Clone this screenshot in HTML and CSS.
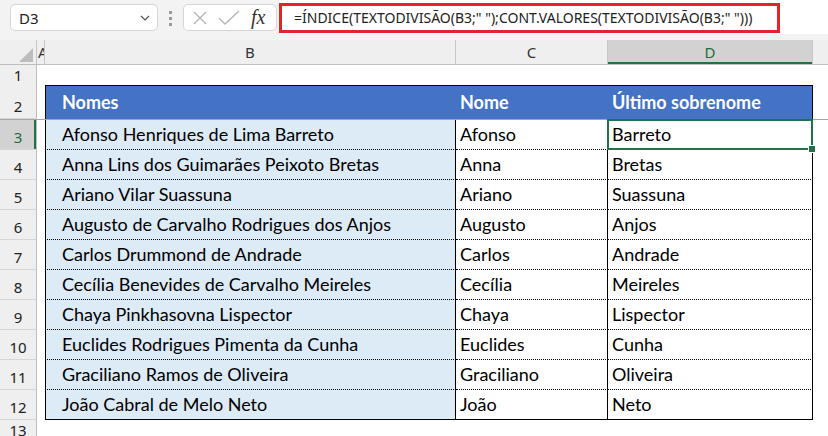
FILE: index.html
```html
<!DOCTYPE html>
<html lang="pt">
<head>
  <meta charset="UTF-8">
  <meta name="viewport" content="width=device-width, initial-scale=1.0">
  <title>TEXTODIVISÃO - Último sobrenome</title>
  <link rel="stylesheet" href="styles.css">
</head>
<body>

  <!-- Formula bar -->
  <div class="toolbar">
    <div class="namebox">
      <span>D3</span>
      <svg class="chevron" width="10" height="6" viewBox="0 0 10 6"><path d="M1 1 L5 5 L9 1" fill="none" stroke="#555" stroke-width="1.2"/></svg>
    </div>
    <div class="grip"><i></i><i></i><i></i></div>
    <div class="fxbox">
      <svg width="16" height="16" viewBox="0 0 16 16"><path d="M2 2 L14 14 M14 2 L2 14" stroke="#b4b4b4" stroke-width="1.3" fill="none"/></svg>
      <svg width="22" height="16" viewBox="0 0 22 16"><path d="M1 8 L7 14 L21 1" stroke="#b4b4b4" stroke-width="1.3" fill="none"/></svg>
      <span class="fx">fx</span>
    </div>
    <div class="formula-bar">
      <div class="formula">=ÍNDICE(TEXTODIVISÃO(B3;" ");CONT.VALORES(TEXTODIVISÃO(B3;" ")))</div>
    </div>
  </div>

  <!-- Sheet -->
  <div class="sheet">
    <div class="row col-heads">
      <div class="corner">
        <svg width="14" height="14" viewBox="0 0 14 14"><path d="M14 0 L14 14 L0 14 Z" fill="#bdbdbd"/></svg>
      </div>
      <div class="ch ch-a">A</div>
      <div class="ch">B</div>
      <div class="ch">C</div>
      <div class="ch active">D</div>
      <div class="ch last"></div>
    </div>

    <div class="row r1">
      <div class="rh">1</div>
      <div></div><div></div><div></div><div></div><div></div>
    </div>

    <div class="row r2">
      <div class="rh">2</div>
      <div></div>
      <div class="c hd b">Nomes</div>
      <div class="c hd">Nome</div>
      <div class="c hd d">Último sobrenome</div>
      <div></div>
    </div>

    <div class="row data frozen">
      <div class="rh active">3</div>
      <div></div>
      <div class="c b">Afonso Henriques de Lima Barreto</div>
      <div class="c m">Afonso</div>
      <div class="c d selected">Barreto<span class="sel"><span class="handle"></span></span></div>
      <div></div>
    </div>
    <div class="row data">
      <div class="rh">4</div>
      <div></div>
      <div class="c b">Anna Lins dos Guimarães Peixoto Bretas</div>
      <div class="c m">Anna</div>
      <div class="c d">Bretas</div>
      <div></div>
    </div>
    <div class="row data">
      <div class="rh">5</div>
      <div></div>
      <div class="c b">Ariano Vilar Suassuna</div>
      <div class="c m">Ariano</div>
      <div class="c d">Suassuna</div>
      <div></div>
    </div>
    <div class="row data">
      <div class="rh">6</div>
      <div></div>
      <div class="c b">Augusto de Carvalho Rodrigues dos Anjos</div>
      <div class="c m">Augusto</div>
      <div class="c d">Anjos</div>
      <div></div>
    </div>
    <div class="row data">
      <div class="rh">7</div>
      <div></div>
      <div class="c b">Carlos Drummond de Andrade</div>
      <div class="c m">Carlos</div>
      <div class="c d">Andrade</div>
      <div></div>
    </div>
    <div class="row data">
      <div class="rh">8</div>
      <div></div>
      <div class="c b">Cecília Benevides de Carvalho Meireles</div>
      <div class="c m">Cecília</div>
      <div class="c d">Meireles</div>
      <div></div>
    </div>
    <div class="row data">
      <div class="rh">9</div>
      <div></div>
      <div class="c b">Chaya Pinkhasovna Lispector</div>
      <div class="c m">Chaya</div>
      <div class="c d">Lispector</div>
      <div></div>
    </div>
    <div class="row data">
      <div class="rh">10</div>
      <div></div>
      <div class="c b">Euclides Rodrigues Pimenta da Cunha</div>
      <div class="c m">Euclides</div>
      <div class="c d">Cunha</div>
      <div></div>
    </div>
    <div class="row data">
      <div class="rh">11</div>
      <div></div>
      <div class="c b">Graciliano Ramos de Oliveira</div>
      <div class="c m">Graciliano</div>
      <div class="c d">Oliveira</div>
      <div></div>
    </div>
    <div class="row data lastrow">
      <div class="rh">12</div>
      <div></div>
      <div class="c b">João Cabral de Melo Neto</div>
      <div class="c m">João</div>
      <div class="c d">Neto</div>
      <div></div>
    </div>

    <div class="row r13">
      <div class="rh">13</div>
      <div></div><div></div><div></div><div></div><div></div>
    </div>
  </div>

</body>
</html>
```

FILE: styles.css
```css
body {
  margin: 0;
  width: 828px;
  height: 436px;
  overflow: hidden;
  background-color: #fff;
  font-family: "Noto Sans", "Open Sans", sans-serif;
  color: #000;
}

/* ---------- formula bar ---------- */

.toolbar {
  display: flex;
  align-items: flex-start;
  height: 40px;
  background-color: #f3f3f3;
  box-sizing: border-box;
}

.namebox {
  display: flex;
  align-items: center;
  justify-content: space-between;
  box-sizing: border-box;
  width: 148px;
  height: 27px;
  margin: 4px 0 0 10px;
  padding: 0 7px 0 8px;
  background-color: #fff;
  border: 1px solid #d6d6d6;
  border-radius: 5px;
  font-size: 15px;
  color: #222;
}

.grip {
  display: flex;
  flex-direction: column;
  gap: 3px;
  margin: 11px 0 0 11px;
}

.grip i {
  display: block;
  width: 3px;
  height: 3px;
  background-color: #9a9a9a;
}

.fxbox {
  display: flex;
  align-items: center;
  box-sizing: border-box;
  width: 94px;
  height: 27px;
  margin: 4px 0 0 11px;
  padding: 0 0 0 8px;
  gap: 10px;
  background-color: #fff;
  border: 1px solid #d6d6d6;
  border-radius: 5px;
}

.fx {
  font-family: "Liberation Serif", serif;
  font-style: italic;
  font-size: 20px;
  color: #333;
  margin-left: 1px;
}

.formula-bar {
  flex: 1;
  height: 34px;
  margin-left: 2px;
  padding-top: 3px;
  background-color: #fff;
  box-sizing: border-box;
}

.formula {
  box-sizing: border-box;
  width: 501px;
  height: 30px;
  padding: 0 0 0 12px;
  border: 3px solid #e4232b;
  font-size: 14px;
  line-height: 24px;
  color: #222;
  white-space: nowrap;
}

/* ---------- sheet ---------- */

.row {
  display: grid;
  grid-template-columns: 37px 8px 411px 152px 205px 15px;
}

.col-heads {
  height: 24px;
  background-color: #efefef;
  border-bottom: 1px solid #bdbdbd;
  font-size: 15px;
  color: #333;
}

.corner {
  display: flex;
  align-items: flex-end;
  justify-content: flex-end;
  padding: 0 3px 2px 0;
  border-right: 1px solid #c6c6c6;
}

.ch {
  display: flex;
  align-items: center;
  justify-content: center;
  border-right: 1px solid #c6c6c6;
}

.ch-a {
  justify-content: flex-start;
  overflow: hidden;
  padding-left: 1px;
}

.ch.last {
  border-right: none;
}

.ch.active {
  background-color: #d2d2d2;
  color: #1e6c41;
  box-shadow: inset 0 -2px 0 #217346;
}

.rh {
  display: flex;
  align-items: flex-end;
  justify-content: center;
  padding-bottom: 2px;
  box-sizing: border-box;
  background-color: #efefef;
  border-right: 1px solid #bdbdbd;
  border-bottom: 1px solid #d6d6d6;
  font-size: 15px;
  color: #222;
}

.rh.active {
  background-color: #d2d2d2;
  color: #1e6c41;
  box-shadow: inset -2px 0 0 #217346;
}

.r1 {
  height: 20px;
}

.r2 {
  height: 34px;
}

.r13 {
  height: 18px;
}

.data {
  height: 30px;
}

.frozen {
  border-top: 1px solid #a6a6a6;
  height: 30px;
}

/* cells */

.c {
  display: flex;
  align-items: center;
  box-sizing: border-box;
  padding: 0 0 2px 4px;
  font-family: "Lato", "Liberation Sans", sans-serif;
  font-size: 18px;
  white-space: nowrap;
}

.hd {
  background-color: #4472c4;
  color: #fff;
  font-weight: bold;
  border-top: 1px solid #000;
}

.c.b {
  padding-left: 16px;
  border-left: 1px solid #000;
}

.data .c.b {
  background-color: #ddebf7;
  border-right: 1px solid #000;
}

.data .c.m {
  border-right: 1px solid #000;
}

.c.d {
  border-right: 1px solid #000;
}

.data .c {
  border-bottom: 1px dotted #000;
}

.lastrow .c {
  border-bottom: 1px solid #000;
}

.selected {
  position: relative;
}

.sel {
  position: absolute;
  top: -1px;
  left: -1px;
  right: -1px;
  bottom: -1px;
  border: 2px solid #217346;
}

.handle {
  position: absolute;
  right: -5px;
  bottom: -5px;
  width: 6px;
  height: 6px;
  background-color: #217346;
  border: 1px solid #fff;
}
```
